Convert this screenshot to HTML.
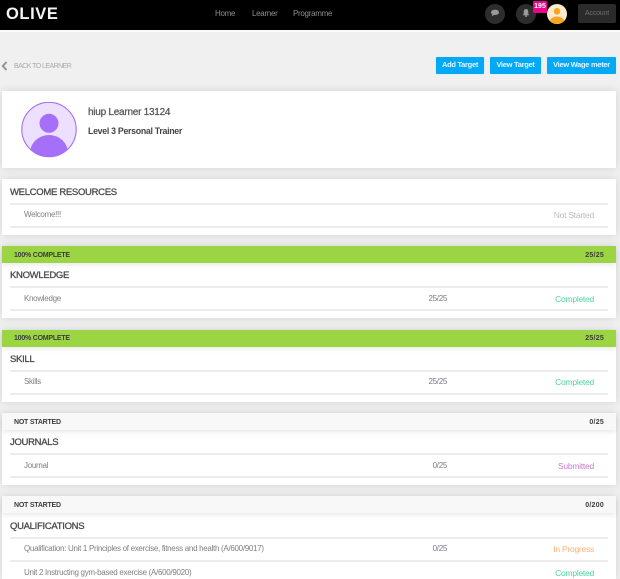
<!DOCTYPE html>
<html><head><meta charset="utf-8">
<style>
html,body{margin:0;padding:0}
body{width:620px;height:579px;overflow:hidden;background:#f0f0f0;position:relative;font-family:"Liberation Sans",sans-serif}
#w{position:absolute;left:0;top:0;width:620px;height:579px;overflow:hidden;filter:blur(.3px)}
.a,.a *{box-sizing:border-box}
.a{position:absolute;white-space:nowrap}
.t{line-height:12px;height:12px}
.card{background:#fff;left:2px;width:614px;box-shadow:0 0 9px rgba(0,0,0,.12)}
.btn{background:#03a9f4;color:#e3f5fe;font-size:7.5px;letter-spacing:-.3px;font-weight:bold;text-align:center;line-height:15px;height:17px;top:57px;border-radius:1px;box-shadow:0 0 0 1px #e4eef3}
.title{left:10px;font-size:9.5px;letter-spacing:-.3px;color:#4a4a4a;-webkit-text-stroke:.3px #4a4a4a}
.line{left:10px;width:598px;height:2px;background:#ececec}
.row{left:24px;font-size:8px;letter-spacing:-.3px;color:#808080}
.cnt{right:173px;font-size:8px;letter-spacing:-.3px;color:#7a7a85}
.st{right:26px;font-size:8.5px;letter-spacing:-.25px}
.bar{left:2px;width:614px;height:17px;box-shadow:0 2px 5px rgba(0,0,0,.09)}
.g{background:#9bd543}
.w{background:#f8f8f8}
.bl{left:14px;font-size:7px;font-weight:bold;color:#3c3c3c;letter-spacing:-.22px}
.br{right:16px;font-size:7px;font-weight:bold;color:#3c3c3c;letter-spacing:.25px}
.nav{top:8px;font-size:8px;letter-spacing:-.3px;color:#8d8d8d}
</style></head><body>
<div id="w">

<div class="a" style="left:0;top:0;width:620px;height:30px;background:#000"></div>
<div class="a" style="left:0;top:30px;width:620px;height:2px;background:#fafafa"></div>
<div class="a t" style="left:6px;top:7px;height:14px;line-height:14px;font-size:16.5px;font-weight:bold;color:#f4f4f4;letter-spacing:.6px">OLIVE</div>
<div class="a t nav" style="left:215px">Home</div>
<div class="a t nav" style="left:252px">Learner</div>
<div class="a t nav" style="left:293px">Programme</div>

<div class="a" style="left:485px;top:4px;width:20px;height:20px;border-radius:50%;background:#2d2d2d"></div>
<svg class="a" style="left:485px;top:4px" width="20" height="20" viewBox="0 0 20 20"><ellipse cx="10" cy="8.300" rx="4" ry="2.700" fill="#9a9a9a"/><path d="M7.500 9.500L6.800 12.300L10 10.500z" fill="#9a9a9a"/></svg>
<div class="a" style="left:516px;top:4px;width:20px;height:20px;border-radius:50%;background:#2d2d2d"></div>
<svg class="a" style="left:516px;top:4px" width="20" height="20" viewBox="0 0 20 20"><path d="M10 5Q12.300 5 12.300 8v2L13.300 11.300H6.700L7.700 10V8Q7.700 5 10 5z" fill="#9a9a9a"/><circle cx="10" cy="12" r="1" fill="#9a9a9a"/></svg>
<div class="a" style="left:533px;top:1px;width:14px;height:12px;background:#ec008c;border-radius:1px;color:#fff;font-size:7px;font-weight:bold;text-align:center;line-height:12px">195</div>
<svg class="a" style="left:547px;top:4px" width="20" height="20" viewBox="0 0 20 20"><circle cx="10" cy="10" r="10" fill="#fdebcf"/><clipPath id="c1"><circle cx="10" cy="10" r="10"/></clipPath><g clip-path="url(#c1)" fill="#f5a623"><circle cx="10" cy="7.300" r="3.300"/><ellipse cx="10" cy="18.500" rx="7.500" ry="6"/></g></svg>
<div class="a" style="left:578px;top:4px;width:38px;height:19px;background:#2b2b2b;border-radius:2px;color:#6f6f6f;font-size:7px;letter-spacing:-.2px;text-align:center;line-height:20px">Account</div>

<svg class="a" style="left:1px;top:61px" width="7" height="10" viewBox="0 0 7 10"><path d="M5.500 1L1.800 5L5.500 9" fill="none" stroke="#8f8f8f" stroke-width="1.800"/></svg>
<div class="a t" style="left:14px;top:61px;font-size:7px;letter-spacing:-.55px;color:#aaa">BACK TO LEARNER</div>
<div class="a btn" style="left:436px;width:48px">Add Target</div>
<div class="a btn" style="left:490px;width:51px">View Target</div>
<div class="a btn" style="left:547px;width:69px">View Wage meter</div>

<div class="a card" style="top:91px;height:77px"></div>
<svg class="a" style="left:21px;top:102px" width="56" height="56" viewBox="0 0 56 56"><circle cx="28" cy="27.500" r="27.200" fill="#ecdfff"/><clipPath id="c2"><circle cx="28" cy="27.500" r="27.200"/></clipPath><g clip-path="url(#c2)" fill="#a56ff8"><circle cx="28" cy="21.300" r="9.500"/><ellipse cx="28" cy="51" rx="19" ry="18"/></g><circle cx="28" cy="27.500" r="27.200" fill="none" stroke="#a56ff8" stroke-width="1.100"/></svg>
<div class="a t" style="left:88px;top:107px;font-size:10px;letter-spacing:-.25px;color:#555;-webkit-text-stroke:.25px #555">hiup Learner 13124</div>
<div class="a t" style="left:88px;top:125px;font-size:8.800px;letter-spacing:-.3px;color:#444;font-weight:bold">Level 3 Personal Trainer</div>

<div class="a card" style="top:179px;height:56px"></div>
<div class="a t title" style="top:187px">WELCOME RESOURCES</div>
<div class="a line" style="top:203px"></div>
<div class="a t row" style="top:209px">Welcome!!!</div>
<div class="a t st" style="top:209px;color:#bdbdbd">Not Started</div>
<div class="a line" style="top:226px"></div>

<div class="a card" style="top:246px;height:72px"></div>
<div class="a bar g" style="top:246px"></div>
<div class="a t bl" style="top:250px">100% COMPLETE</div>
<div class="a t br" style="top:250px">25/25</div>
<div class="a t title" style="top:270px">KNOWLEDGE</div>
<div class="a line" style="top:286px"></div>
<div class="a t row" style="top:293px">Knowledge</div>
<div class="a t cnt" style="top:293px">25/25</div>
<div class="a t st" style="top:293px;color:#4fd3a5">Completed</div>
<div class="a line" style="top:309px"></div>

<div class="a card" style="top:330px;height:72px"></div>
<div class="a bar g" style="top:330px"></div>
<div class="a t bl" style="top:333px">100% COMPLETE</div>
<div class="a t br" style="top:333px">25/25</div>
<div class="a t title" style="top:354px">SKILL</div>
<div class="a line" style="top:370px"></div>
<div class="a t row" style="top:376px">Skills</div>
<div class="a t cnt" style="top:376px">25/25</div>
<div class="a t st" style="top:376px;color:#4fd3a5">Completed</div>
<div class="a line" style="top:393px"></div>

<div class="a card" style="top:413px;height:72px"></div>
<div class="a bar w" style="top:413px"></div>
<div class="a t bl" style="top:417px">NOT STARTED</div>
<div class="a t br" style="top:417px">0/25</div>
<div class="a t title" style="top:437px">JOURNALS</div>
<div class="a line" style="top:453px"></div>
<div class="a t row" style="top:460px">Journal</div>
<div class="a t cnt" style="top:460px">0/25</div>
<div class="a t st" style="top:460px;color:#c77dcb">Submitted</div>
<div class="a line" style="top:476px"></div>

<div class="a card" style="top:496px;height:83px"></div>
<div class="a bar w" style="top:496px"></div>
<div class="a t bl" style="top:500px">NOT STARTED</div>
<div class="a t br" style="top:500px">0/200</div>
<div class="a t title" style="top:521px">QUALIFICATIONS</div>
<div class="a line" style="top:537px"></div>
<div class="a t row" style="top:543px">Qualification: Unit 1 Principles of exercise, fitness and health (A/600/9017)</div>
<div class="a t cnt" style="top:543px">0/25</div>
<div class="a t st" style="top:543px;color:#fdb075">In Progress</div>
<div class="a line" style="top:560px"></div>
<div class="a t row" style="top:567px">Unit 2 Instructing gym-based exercise (A/600/9020)</div>
<div class="a t st" style="top:567px;color:#4fd3a5">Completed</div>

</div>
</body></html>
